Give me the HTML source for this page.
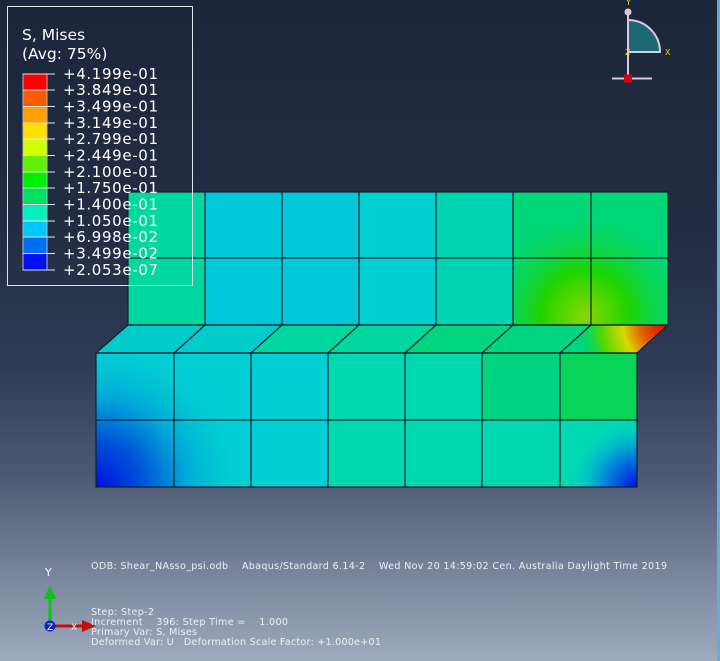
<!DOCTYPE html>
<html><head><meta charset="utf-8"><style>
html,body{margin:0;padding:0}
body{width:720px;height:661px;overflow:hidden;position:relative;background:linear-gradient(to bottom,#1c263a 0%,#222d44 35%,#2f3b55 55%,#4e5a73 72%,#7b889f 88%,#9eaabd 100%);font-family:"DejaVu Sans",sans-serif}
svg{position:absolute;left:0;top:0}
</style></head><body>
<svg width="720" height="661" viewBox="0 0 720 661">
<defs>
<radialGradient id="bl" cx="96" cy="487" r="150" gradientUnits="userSpaceOnUse"><stop offset="0" stop-color="#0010e0"/><stop offset="0.3" stop-color="#0050d8"/><stop offset="0.6" stop-color="#00a8d8"/><stop offset="1" stop-color="#00c8d0" stop-opacity="0"/></radialGradient>
<radialGradient id="br" cx="637" cy="487" r="70" gradientUnits="userSpaceOnUse"><stop offset="0" stop-color="#0010e0"/><stop offset="0.5" stop-color="#0090d8"/><stop offset="1" stop-color="#00d8d0" stop-opacity="0"/></radialGradient>
<radialGradient id="rd" cx="668" cy="325" r="90" gradientUnits="userSpaceOnUse"><stop offset="0" stop-color="#e00000"/><stop offset="0.3" stop-color="#e06000"/><stop offset="0.5" stop-color="#d8d800"/><stop offset="0.75" stop-color="#50d800"/><stop offset="1" stop-color="#00d840" stop-opacity="0"/></radialGradient>
<radialGradient id="gr" cx="585" cy="315" r="110" gradientUnits="userSpaceOnUse"><stop offset="0" stop-color="#88d800"/><stop offset="0.4" stop-color="#20d400"/><stop offset="1" stop-color="#00d080" stop-opacity="0"/></radialGradient>
</defs>
<rect x="128" y="192" width="540" height="133" fill="#00d0c8"/>
<rect x="128" y="192" width="77" height="133" fill="#00d8a0"/>
<rect x="205" y="192" width="154" height="133" fill="#00c8d8"/>
<rect x="359" y="192" width="77" height="133" fill="#00d0d0"/>
<rect x="436" y="192" width="77" height="133" fill="#00d4b0"/>
<rect x="513" y="192" width="155" height="133" fill="#00d878"/>
<rect x="513" y="192" width="155" height="133" fill="url(#gr)"/>
<polygon points="128,325 668,325 637,353 96,353" fill="#00d680"/>
<polygon points="128,325 282,325 251,353 96,353" fill="#00cccc"/>
<polygon points="282,325 436,325 405,353 251,353" fill="#00d8a0"/>
<polygon points="591,325 668,325 637,353 560,353" fill="url(#rd)"/>
<rect x="96" y="353" width="541" height="134" fill="#00d8b0"/>
<rect x="96" y="353" width="232" height="134" fill="#00d0d4"/>
<rect x="482" y="353" width="155" height="67" fill="#00d480"/>
<rect x="560" y="353" width="77" height="67" fill="#08d458"/>
<rect x="96" y="353" width="541" height="134" fill="url(#bl)"/>
<rect x="560" y="420" width="77" height="67" fill="url(#br)"/>
<g stroke="#10202a" stroke-width="1.2" fill="none">
<rect x="128" y="192" width="540" height="133"/>
<line x1="128" y1="258" x2="668" y2="258"/>
<path d="M205 192V325M282 192V325M359 192V325M436 192V325M513 192V325M591 192V325"/>
<polygon points="128,325 668,325 637,353 96,353"/>
<path d="M205 325L174 353M282 325L251 353M359 325L328 353M436 325L405 353M513 325L482 353M591 325L560 353"/>
<rect x="96" y="353" width="541" height="134"/>
<line x1="96" y1="420" x2="637" y2="420"/>
<path d="M174 353V487M251 353V487M328 353V487M405 353V487M482 353V487M560 353V487"/>
</g>
<rect x="7.5" y="6.5" width="185" height="279" fill="none" stroke="#dfe3ea" stroke-width="1"/>
<text x="22" y="40" fill="#fff" font-size="15.5">S, Mises</text>
<text x="22" y="59" fill="#fff" font-size="15.5">(Avg: 75%)</text>
<g>
<rect x="23" y="74" width="24" height="16.3" fill="#ff0000"/>
<rect x="23" y="90.3" width="24" height="16.3" fill="#ff5a00"/>
<rect x="23" y="106.6" width="24" height="16.3" fill="#ffa000"/>
<rect x="23" y="122.9" width="24" height="16.3" fill="#ffe000"/>
<rect x="23" y="139.2" width="24" height="16.3" fill="#d0ff00"/>
<rect x="23" y="155.5" width="24" height="16.3" fill="#60f000"/>
<rect x="23" y="171.8" width="24" height="16.3" fill="#00f000"/>
<rect x="23" y="188.1" width="24" height="16.3" fill="#00e060"/>
<rect x="23" y="204.4" width="24" height="16.3" fill="#00f0c0"/>
<rect x="23" y="220.7" width="24" height="16.3" fill="#00c8ff"/>
<rect x="23" y="237" width="24" height="16.3" fill="#0070f0"/>
<rect x="23" y="253.3" width="24" height="16.7" fill="#0010f0"/>
<rect x="23" y="74" width="24" height="196" fill="none" stroke="#b0b8c4" stroke-width="1"/>
</g>
<g stroke="#e0e4ea" stroke-width="1">
<path d="M23 74H55M23 90H55M23 106.5H55M23 123H55M23 139H55M23 155.5H55M23 172H55M23 188H55M23 204.5H55M23 221H55M23 237H55M23 253.5H55M23 270H55"/>
</g>
<g fill="#fff" font-size="15">
<text x="63" y="79" textLength="95">+4.199e-01</text>
<text x="63" y="95" textLength="95">+3.849e-01</text>
<text x="63" y="111.5" textLength="95">+3.499e-01</text>
<text x="63" y="128" textLength="95">+3.149e-01</text>
<text x="63" y="144" textLength="95">+2.799e-01</text>
<text x="63" y="160.5" textLength="95">+2.449e-01</text>
<text x="63" y="177" textLength="95">+2.100e-01</text>
<text x="63" y="193" textLength="95">+1.750e-01</text>
<text x="63" y="209.5" textLength="95">+1.400e-01</text>
<text x="63" y="226" textLength="95">+1.050e-01</text>
<text x="63" y="242" textLength="95">+6.998e-02</text>
<text x="63" y="258.5" textLength="95">+3.499e-02</text>
<text x="63" y="275" textLength="95">+2.053e-07</text>
</g>
<path d="M628 20 A32 32 0 0 1 660 52 L628 52 Z" fill="#1b6872" stroke="#d8c8e8" stroke-width="2"/>
<line x1="628" y1="12" x2="628" y2="78" stroke="#d8c8e8" stroke-width="2"/>
<line x1="612" y1="78.5" x2="652" y2="78.5" stroke="#d8c8e8" stroke-width="2"/>
<circle cx="628" cy="12" r="3.5" fill="#d8c8e8"/>
<rect x="624" y="74.5" width="8" height="8" fill="#d80010"/>
<g fill="#e8e000" font-size="8">
<text x="626" y="5">Y</text><text x="665" y="55">X</text><text x="625" y="55">Z</text>
</g>
<text x="45" y="576" fill="#fff" font-size="11">Y</text>
<line x1="50" y1="597" x2="50" y2="622" stroke="#10c020" stroke-width="3"/>
<polygon points="44,599 56,599 50,585" fill="#10c020"/>
<line x1="52" y1="626" x2="84" y2="626" stroke="#c01010" stroke-width="3"/>
<polygon points="82,620 82,632 96,626" fill="#c01010"/>
<circle cx="50" cy="626" r="5.5" fill="#1020c0"/>
<text x="47" y="630" fill="#fff" font-size="9">Z</text>
<text x="71" y="630" fill="#fff" font-size="9">X</text>
<g fill="#eef1f5" font-size="9.6" font-family="DejaVu Sans">
<text x="91" y="569" textLength="576" xml:space="preserve">ODB: Shear_NAsso_psi.odb    Abaqus/Standard 6.14-2    Wed Nov 20 14:59:02 Cen. Australia Daylight Time 2019</text>
<text x="91" y="615" textLength="63">Step: Step-2</text>
<text x="91" y="625" textLength="197" xml:space="preserve">Increment    396: Step Time =    1.000</text>
<text x="91" y="635" textLength="106">Primary Var: S, Mises</text>
<text x="91" y="645" textLength="290" xml:space="preserve">Deformed Var: U   Deformation Scale Factor: +1.000e+01</text>
</g>
<rect x="717" y="0" width="3" height="661" fill="#6fa8d8"/>
</svg>
</body></html>
